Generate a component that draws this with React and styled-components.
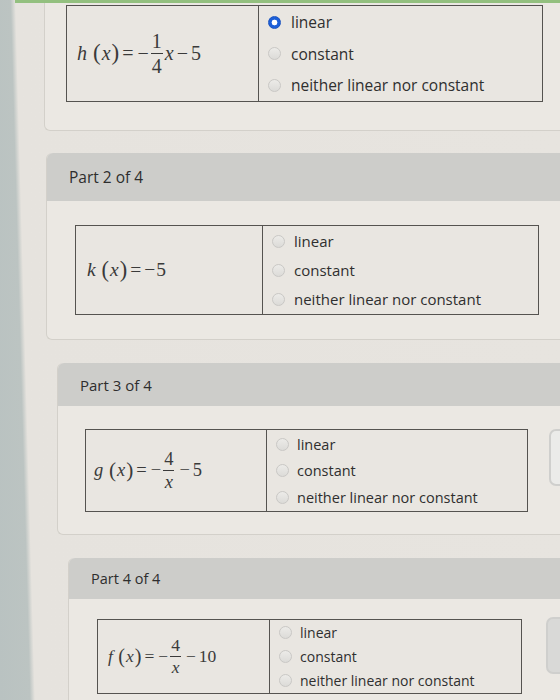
import React from "react";
import styled, { createGlobalStyle } from "styled-components";

const Global = createGlobalStyle`
  html, body { margin: 0; padding: 0; }
  body {
    width: 560px;
    height: 700px;
    overflow: hidden;
    background: linear-gradient(88.4deg, #b9c2c1 0px, #bcc4c2 30px, #e6e3de 35px, #e7e4df 100%);
    font-family: "Open Sans", "Liberation Sans", sans-serif;
    color: #333;
  }
`;

const Page = styled.div`
  width: 560px;
  height: 700px;
  overflow: hidden;
  display: flex;
  flex-direction: column;
`;

const TopStripe = styled.div`
  height: 3px;
  margin-left: 15px;
  background: #93c07f;
  flex: none;
`;

const Section = styled.section`
  flex: none;
  margin-left: ${(p) => p.$indent}px;
  margin-top: ${(p) => p.$gap}px;
  background: #ebe8e3;
  border-left: 1px solid #d3d0ca;
  border-bottom: 1px solid #d3d0ca;
  border-radius: ${(p) => (p.$header ? "6px" : "0")} 0 0 6px;
`;

const Header = styled.div`
  height: ${(p) => p.$h}px;
  background: #cdcdca;
  border-top-left-radius: 6px;
  display: flex;
  align-items: center;
  padding-left: 22px;
  font-size: ${(p) => p.$fs}px;
  color: #2e2e2e;
`;

const Body = styled.div`
  display: flex;
  align-items: flex-start;
  padding: ${(p) => p.$top}px 0 ${(p) => p.$bottom}px ${(p) => p.$left}px;
`;

const Table = styled.div`
  flex: none;
  display: grid;
  grid-template-columns: ${(p) => p.$col}px 1fr;
  width: ${(p) => p.$w}px;
  height: ${(p) => p.$h}px;
  box-sizing: border-box;
  border: 1px solid #555350;
  background: #e9e6e1;
`;

const FnCell = styled.div`
  display: flex;
  align-items: center;
  padding-left: ${(p) => p.$pl}px;
  border-right: 1px solid #555350;
  font-family: "Liberation Serif", "DejaVu Serif", serif;
  font-size: ${(p) => p.$fs}px;
  color: #3a3a3a;
  white-space: nowrap;
`;

const Choices = styled.div`
  display: flex;
  flex-direction: column;
  justify-content: center;
  padding-left: 9px;
`;

const Choice = styled.label`
  display: flex;
  align-items: center;
  gap: ${(p) => p.$gapX}px;
  height: ${(p) => p.$rowH}px;
  font-size: ${(p) => p.$fs}px;
  color: #2f2f2f;
`;

const Radio = styled.span`
  flex: none;
  box-sizing: border-box;
  width: 13px;
  height: 13px;
  border-radius: 50%;
  ${(p) =>
    p.$on
      ? `background: radial-gradient(circle, #fff 0 2.6px, #1d5fd8 3.2px);
         border: 1px solid #1b54c0;`
      : `background: linear-gradient(#ecebe8, #dcdbd8);
         border: 1px solid #c9c8c5;`}
`;

const I = styled.i`
  font-style: italic;
`;

const FnName = styled.i`
  font-style: italic;
  margin-right: 0.25em;
`;

const Paren = styled.span`
  font-size: 1.15em;
  margin: 0 1px;
  position: relative;
  top: -0.02em;
`;

const Op = styled.span`
  margin: 0 ${(p) => p.$m ?? 3}px;
`;

const Frac = styled.span`
  display: inline-flex;
  flex-direction: column;
  align-items: center;
  vertical-align: middle;
  margin: 0 3px 0 1px;
  line-height: 1.1;
`;

const FracBar = styled.span`
  align-self: stretch;
  border-top: 1px solid #3a3a3a;
  margin: 1px -1px;
`;

const SideButton = styled.div`
  flex: none;
  margin-left: ${(p) => p.$ml}px;
  margin-top: ${(p) => p.$mt}px;
  width: 40px;
  height: 57px;
  box-sizing: border-box;
  border: 2px solid #cfcfcd;
  border-radius: 7px;
  background: ${(p) => p.$fill};
`;

const OPTIONS = ["linear", "constant", "neither linear nor constant"];

const head = (n) => (
  <>
    <FnName>{n}</FnName>
    <Paren>(</Paren>
    <I>x</I>
    <Paren>)</Paren>
    <Op $m={2}>=</Op>
  </>
);

const fns = {
  h: (
    <>
      {head("h")}
      <Op $m={2}>−</Op>
      <Frac>
        <span>1</span>
        <FracBar />
        <span>4</span>
      </Frac>
      <I>x</I>
      <Op>−</Op>5
    </>
  ),
  k: (
    <>
      {head("k")}
      <Op $m={1}>−</Op>5
    </>
  ),
  g: (
    <>
      {head("g")}
      <Op $m={2}>−</Op>
      <Frac>
        <span>4</span>
        <FracBar />
        <I>x</I>
      </Frac>
      <Op>−</Op>5
    </>
  ),
  f: (
    <>
      {head("f")}
      <Op $m={2}>−</Op>
      <Frac>
        <span>4</span>
        <FracBar />
        <I>x</I>
      </Frac>
      <Op>−</Op>10
    </>
  ),
};

const PARTS = [
  {
    key: 1, header: null, indent: 44, gap: 0, headerH: 0, top: 2, bottom: 28, left: 21,
    w: 477, h: 97, col: 192, fs: 15.5, math: 20, pl: 10, rowH: 31.5, gapX: 10, fn: "h", sel: 0,
  },
  {
    key: 2, header: "Part 2 of 4", indent: 46, gap: 22, headerH: 48, top: 24, bottom: 24, left: 28,
    w: 464, h: 90, col: 187, fs: 15, math: 19.5, pl: 11, rowH: 29, gapX: 9, fn: "k", sel: -1,
  },
  {
    key: 3, header: "Part 3 of 4", indent: 57, gap: 23, headerH: 43, top: 23, bottom: 22, left: 27,
    w: 443, h: 83, col: 181, fs: 14.5, math: 18.5, pl: 8, rowH: 26.5, gapX: 8, fn: "g", sel: -1,
    side: { ml: 21, mt: 0, fill: "#ebebe9" },
  },
  {
    key: 4, header: "Part 4 of 4", indent: 68, gap: 23, headerH: 41, top: 20, bottom: 20, left: 28,
    w: 425, h: 75, col: 172, fs: 14, math: 17.5, pl: 10, rowH: 24, gapX: 8, fn: "f", sel: -1,
    side: { ml: 24, mt: -2, fill: "#d9d9d7" },
  },
];

export default function App() {
  return (
    <Page>
      <Global />
      <TopStripe />
      {PARTS.map((p) => (
        <Section key={p.key} $indent={p.indent} $gap={p.gap} $header={!!p.header}>
          {p.header && (
            <Header $h={p.headerH} $fs={p.fs + 0.5}>
              {p.header}
            </Header>
          )}
          <Body $top={p.top} $bottom={p.bottom} $left={p.left}>
            <Table $w={p.w} $h={p.h} $col={p.col}>
              <FnCell $fs={p.math} $pl={p.pl}>{fns[p.fn]}</FnCell>
              <Choices>
                {OPTIONS.map((o, i) => (
                  <Choice key={o} $rowH={p.rowH} $fs={p.fs} $gapX={p.gapX}>
                    <Radio $on={p.sel === i} />
                    {o}
                  </Choice>
                ))}
              </Choices>
            </Table>
            {p.side && <SideButton $ml={p.side.ml} $mt={p.side.mt} $fill={p.side.fill} />}
          </Body>
        </Section>
      ))}
    </Page>
  );
}
